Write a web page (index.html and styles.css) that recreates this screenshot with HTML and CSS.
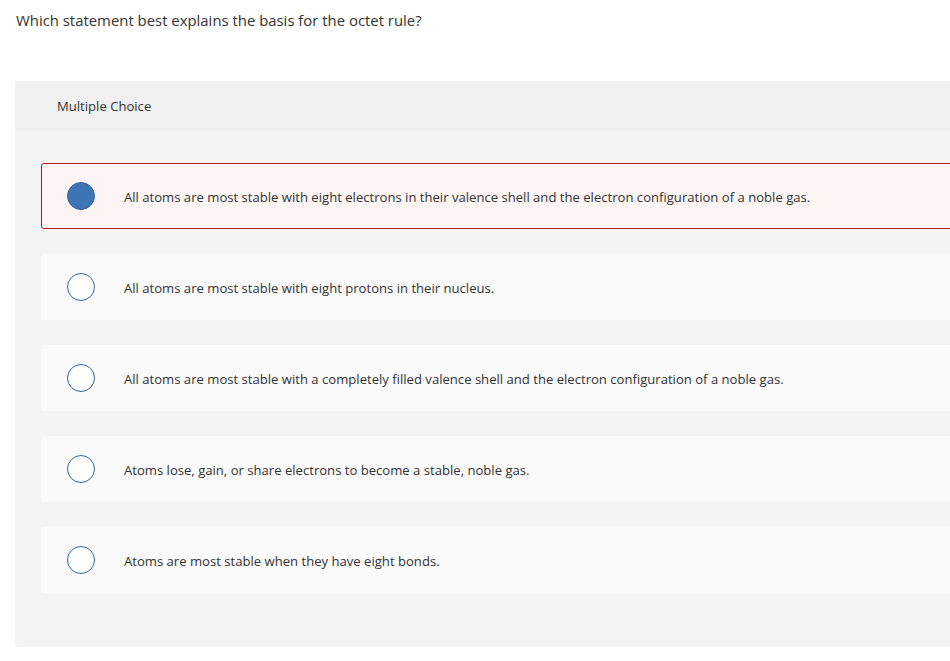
FILE: index.html
```html
<!DOCTYPE html>
<html>
<head>
<meta charset="utf-8">
<link rel="stylesheet" href="styles.css">
</head>
<body>
<div class="page">
  <p class="question">Which statement best explains the basis for the octet rule?</p>
  <div class="panel">
    <div class="panel-head">Multiple Choice</div>
    <div class="panel-body">
      <div class="option selected">
        <span class="radio"></span>
        <span class="label">All atoms are most stable with eight electrons in their valence shell and the electron configuration of a noble gas.</span>
      </div>
      <div class="option">
        <span class="radio"></span>
        <span class="label">All atoms are most stable with eight protons in their nucleus.</span>
      </div>
      <div class="option">
        <span class="radio"></span>
        <span class="label">All atoms are most stable with a completely filled valence shell and the electron configuration of a noble gas.</span>
      </div>
      <div class="option">
        <span class="radio"></span>
        <span class="label">Atoms lose, gain, or share electrons to become a stable, noble gas.</span>
      </div>
      <div class="option">
        <span class="radio"></span>
        <span class="label">Atoms are most stable when they have eight bonds.</span>
      </div>
    </div>
  </div>
</div>
</body>
</html>
```

FILE: styles.css
```css
html, body {
  margin: 0;
  padding: 0;
  background: #ffffff;
  overflow: hidden;
}
body {
  font-family: "Open Sans", "Liberation Sans", sans-serif;
  color: #333333;
}
.page {
  width: 950px;
  box-sizing: border-box;
  overflow: hidden;
  padding: 11px 0 14px 15px;
}
.question {
  margin: 0 0 0 1px;
  font-size: 14.9px;
  line-height: 18px;
  color: #333333;
}
.panel {
  margin-top: 52px;
  width: 960px;
  background: #f4f4f4;
  border-radius: 0 0 3px 3px;
}
.panel-head {
  height: 50px;
  background: #f0f0f0;
  display: flex;
  align-items: center;
  padding-left: 42px;
  font-size: 13.1px;
  color: #333333;
}
.panel-body {
  padding: 32px 0 54px 26px;
  display: flex;
  flex-direction: column;
  gap: 25px;
}
.option {
  height: 66px;
  box-sizing: border-box;
  background: #fafafa;
  border-radius: 3px;
  display: flex;
  align-items: center;
  padding-left: 25px;
  border: 1px solid transparent;
}
.option.selected {
  background: #fdf5f4;
  border-color: #c0121c;
}
.radio {
  width: 28px;
  height: 28px;
  box-sizing: border-box;
  border-radius: 50%;
  border: 1.5px solid #2f649f;
  background: #ffffff;
  flex: none;
}
.option.selected .radio {
  background: #3c74b4;
  border-color: #2f649f;
}
.label {
  margin-left: 29px;
  margin-top: 2px;
  font-size: 13.1px;
  color: #333333;
}
```
